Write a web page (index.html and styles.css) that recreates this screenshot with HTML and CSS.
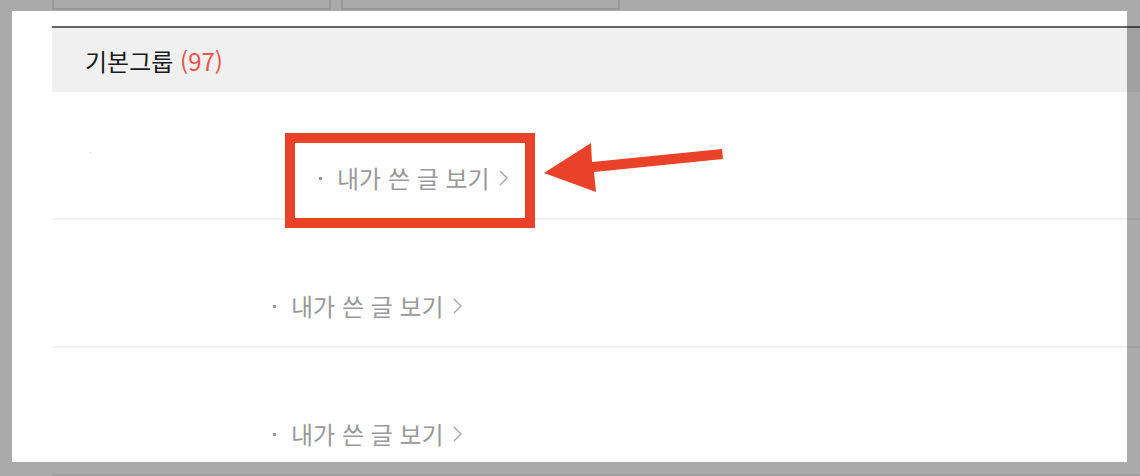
FILE: index.html
```html
<!DOCTYPE html>
<html lang="ko">
<head>
<meta charset="utf-8">
<title>기본그룹</title>
<link rel="stylesheet" href="styles.css">
</head>
<body>
<div class="page">
  <div class="tabs">
    <div class="tab"></div>
    <div class="tab"></div>
  </div>
  <section class="group">
    <div class="group-head">기본그룹 <span class="count">(97)</span></div>
    <div class="row row-first">
      <span class="pixel"></span>
      <a class="link"><span class="dot"></span><span class="label">내가 쓴 글 보기</span><svg class="chev" width="9" height="16" viewBox="0 0 9 16"><path d="M1 1 L8 8 L1 15" fill="none" stroke="#a3a3a3" stroke-width="1.4"/></svg></a>
    </div>
    <div class="row">
      <a class="link"><span class="dot"></span><span class="label">내가 쓴 글 보기</span><svg class="chev" width="9" height="16" viewBox="0 0 9 16"><path d="M1 1 L8 8 L1 15" fill="none" stroke="#a3a3a3" stroke-width="1.4"/></svg></a>
    </div>
    <div class="row">
      <a class="link"><span class="dot"></span><span class="label">내가 쓴 글 보기</span><svg class="chev" width="9" height="16" viewBox="0 0 9 16"><path d="M1 1 L8 8 L1 15" fill="none" stroke="#a3a3a3" stroke-width="1.4"/></svg></a>
    </div>
  </section>
</div>
<div class="spot"></div>
<div class="mark-box"></div>
<svg class="mark-arrow" width="190" height="56" viewBox="0 0 190 56"><polygon points="4,33 51,3 52,22 182,9 183,19 54,32 56,52" fill="#ea4129"/></svg>
</body>
</html>
```
FILE: styles.css
```css
html, body {
  margin: 0;
  padding: 0;
  background: #fff;
  width: 1140px;
  height: 476px;
  overflow: hidden;
  position: relative;
  font-family: "Noto Sans CJK KR", "Noto Sans", sans-serif;
}

.page {
  padding-left: 52px;
}

.tabs {
  display: flex;
  gap: 10px;
  height: 10px;
  margin-bottom: 16px;
}

.tab {
  width: 275px;
  height: 8px;
  border: 2px solid #e1e1e1;
  border-top: none;
}

.group {
  border-top: 2px solid #666;
}

.group-head {
  height: 64px;
  background: #f0f0f0;
  display: flex;
  align-items: center;
  padding-left: 33px;
  font-size: 24px;
  color: #1a1a1a;
  white-space: pre;
}

.count {
  color: #ea5249;
}

.row {
  height: 126px;
  border-bottom: 2px solid #f0f0f0;
  box-sizing: content-box;
  display: flex;
  align-items: flex-start;
  padding-left: 221px;
  position: relative;
}

.row-first {
  padding-left: 267px;
}

.pixel {
  position: absolute;
  left: 38px;
  top: 60px;
  width: 1px;
  height: 1px;
  background: #b5e8b0;
}

.link {
  display: flex;
  align-items: center;
  margin-top: 70px;
  height: 32px;
  color: #999;
  font-size: 24px;
  line-height: 32px;
  cursor: pointer;
}

.dot {
  width: 3px;
  height: 3px;
  background: #999;
  margin-right: 15px;
}

.chev {
  margin-left: 9px;
  display: block;
}

.spot {
  position: absolute;
  left: 12px;
  top: 11px;
  width: 1115px;
  height: 451px;
  box-shadow: 0 0 0 1400px rgba(0, 0, 0, 0.333);
  pointer-events: none;
}

.mark-box {
  position: absolute;
  left: 285px;
  top: 133px;
  width: 250px;
  height: 95px;
  box-sizing: border-box;
  border: 10px solid #ea4129;
}

.mark-arrow {
  position: absolute;
  left: 540px;
  top: 140px;
}
```
